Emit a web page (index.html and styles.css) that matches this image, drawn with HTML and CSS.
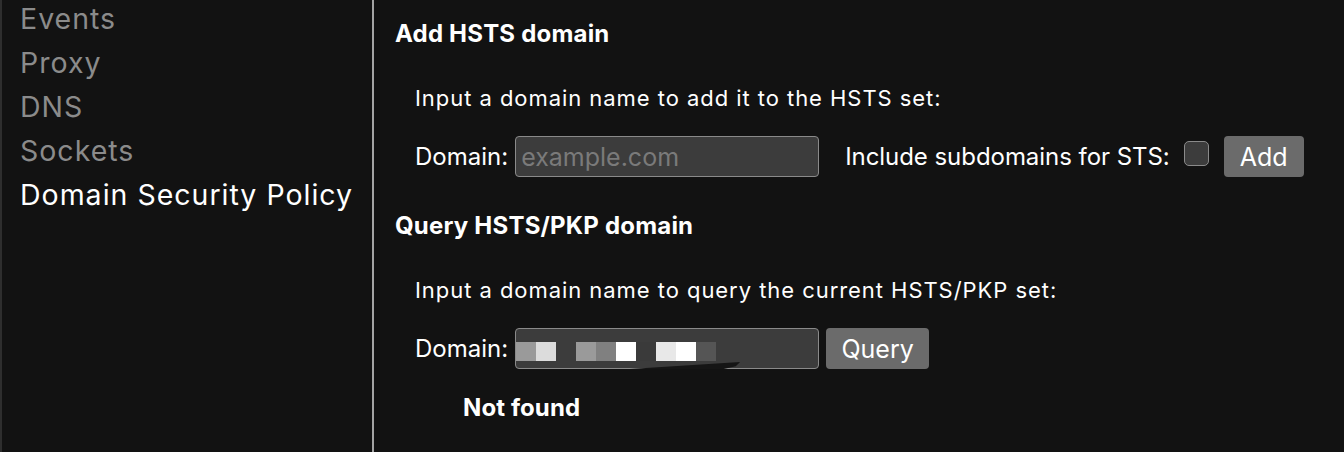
FILE: index.html
```html
<!DOCTYPE html>
<html lang="en">
<head>
<meta charset="utf-8">
<title>Domain Security Policy</title>
<link rel="stylesheet" href="styles.css">
</head>
<body>
<div class="page">
  <nav class="sidebar">
    <ul class="tabs">
      <li class="tab">Events</li>
      <li class="tab">Proxy</li>
      <li class="tab">DNS</li>
      <li class="tab">Sockets</li>
      <li class="tab active">Domain Security Policy</li>
    </ul>
  </nav>
  <main class="content">
    <section class="block">
      <h2 class="heading">Add HSTS domain</h2>
      <p class="desc">Input a domain name to add it to the HSTS set:</p>
      <div class="row">
        <label class="label">Domain:</label>
        <input class="field" type="text" placeholder="example.com">
        <span class="label sub-label">Include subdomains for STS:</span>
        <span class="checkbox"></span>
        <button class="btn btn-add">Add</button>
      </div>
    </section>
    <section class="block">
      <h2 class="heading">Query HSTS/PKP domain</h2>
      <p class="desc">Input a domain name to query the current HSTS/PKP set:</p>
      <div class="row">
        <label class="label">Domain:</label>
        <div class="field redacted">
          <span class="px p1"></span><span class="px p2"></span><span class="px p0"></span><span class="px p1"></span><span class="px p3"></span><span class="px p4"></span><span class="px p5"></span><span class="px p6"></span><span class="px p4"></span><span class="px p7"></span>
          <span class="smudge"></span>
        </div>
        <button class="btn btn-query">Query</button>
      </div>
      <p class="result">Not found</p>
    </section>
  </main>
</div>
</body>
</html>
```

FILE: styles.css
```css
html, body {
  margin: 0;
  padding: 0;
  background: #121212;
  height: 100%;
  overflow: hidden;
}
body {
  font-family: Inter, "Liberation Sans", sans-serif;
  color: #ffffff;
}
.page {
  display: flex;
  height: 452px;
  border-left: 2px solid #2e2e2e;
}
.sidebar {
  width: 370px;
  flex: none;
  border-right: 2px solid #a3a3a3;
}
.tabs {
  list-style: none;
  margin: -3px 0 0 0;
  padding: 0 0 0 18px;
}
.tab {
  font-size: 28.5px;
  letter-spacing: 1px;
  line-height: 44px;
  color: #8b8b8b;
  white-space: nowrap;
}
.tab.active {
  color: #ffffff;
}
.content {
  flex: 1;
  padding: 22px 0 0 21px;
}
.block + .block {
  margin-top: 37px;
}
.heading {
  margin: 0;
  font-size: 24px;
  letter-spacing: 0.2px;
  line-height: 24px;
  font-weight: 700;
}
.desc {
  margin: 40px 0 0 20px;
  font-size: 22px;
  letter-spacing: 0.95px;
  line-height: 24px;
}
.row {
  display: flex;
  align-items: center;
  margin: 26px 0 0 20px;
  height: 41px;
}
.label {
  font-size: 24px;
  line-height: 26px;
  white-space: nowrap;
}
.field {
  box-sizing: border-box;
  width: 304px;
  height: 41px;
  margin-left: 7px;
  padding: 0 5px;
  background: #3c3c3c;
  border: 1.5px solid #8a8a8a;
  border-radius: 4px;
  color: #fff;
  font-family: inherit;
  font-size: 25px;
  outline: none;
}
.field::placeholder {
  color: #7a7a7a;
}
.sub-label {
  margin-left: 26px;
  letter-spacing: -0.05px;
}
.checkbox {
  box-sizing: border-box;
  width: 25px;
  height: 25px;
  margin: 0 0 7px 14px;
  background: #3c3c3c;
  border: 1.5px solid #8a8a8a;
  border-radius: 5px;
}
.btn {
  height: 41px;
  border: none;
  border-radius: 4px;
  background: #6b6b6b;
  color: #fff;
  font-family: inherit;
  font-size: 25px;
  padding: 0;
}
.btn-add {
  width: 80px;
  margin-left: 15px;
}
.btn-query {
  width: 103px;
  margin-left: 7px;
}
.redacted {
  display: flex;
  align-items: center;
  padding: 5px 0 0 0;
  position: relative;
}
.px {
  width: 20px;
  height: 19px;
  flex: none;
}
.p0 { background: #3c3c3c; }
.p1 { background: #9a9a9a; }
.p2 { background: #dcdcdc; }
.p3 { background: #808080; }
.p4 { background: #ffffff; }
.p5 { background: #3a3a3a; }
.p6 { background: #e8e8e8; }
.p7 { background: #555555; }
.smudge {
  position: absolute;
  left: 114px;
  bottom: -1px;
  width: 110px;
  height: 7px;
  background: #151515;
  clip-path: polygon(0 100%, 100% 0, 96% 60%, 85% 100%);
}
.result {
  margin: 27px 0 0 68px;
  font-size: 24px;
  letter-spacing: 0.1px;
  line-height: 24px;
  font-weight: 700;
}
```
